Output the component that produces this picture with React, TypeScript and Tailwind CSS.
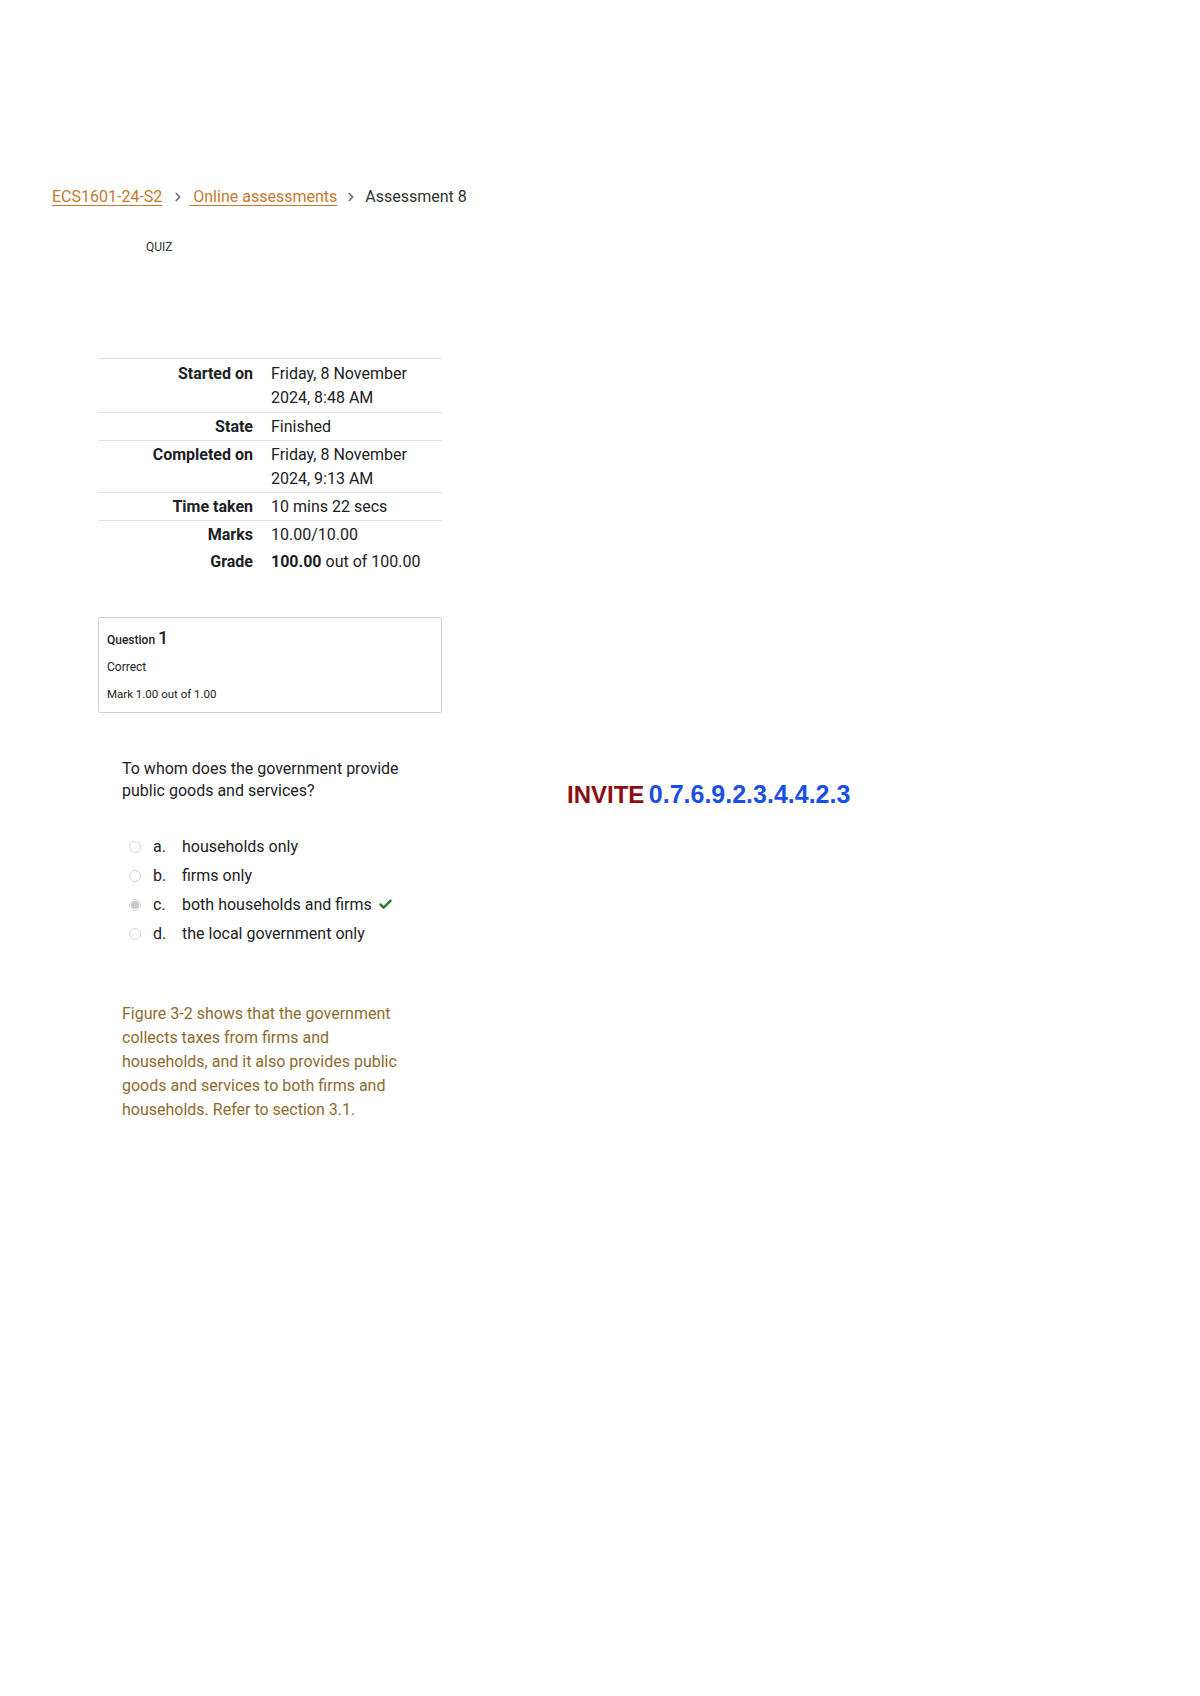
import { Check, ChevronRight } from "lucide-react";

const rows: { label: string; value: React.ReactNode }[] = [
    { label: "Started on", value: "Friday, 8 November 2024, 8:48 AM" },
    { label: "State", value: "Finished" },
    { label: "Completed on", value: "Friday, 8 November 2024, 9:13 AM" },
    { label: "Time taken", value: "10 mins 22 secs" },
    { label: "Marks", value: "10.00/10.00" },
    { label: "Grade", value: <><span className="font-bold">100.00</span> out of 100.00</> },
];

const options = [
    { letter: "a.", text: "households only" },
    { letter: "b.", text: "firms only" },
    { letter: "c.", text: "both households and firms", checked: true },
    { letter: "d.", text: "the local government only" },
];

export default function App() {
    return (
        <div className="min-h-[1696px] bg-white text-[#1d2125] font-['Roboto',sans-serif]">
            <Breadcrumb />
            <p className="ml-[146px] mt-[32px] text-[12px] leading-[14px] text-[#333]">QUIZ</p>

            <SummaryTable />

            <div className="ml-[98px] mt-[42px] w-[344px] border border-[#cfd2d5] rounded-[2px] px-[8px] pt-[10px] pb-[10px]">
                <p className="leading-[20px] text-[12px] font-medium">
                    Question <span className="text-[18px] font-medium">1</span>
                </p>
                <p className="mt-[9px] text-[12px] leading-[16px]">Correct</p>
                <p className="mt-[11px] text-[11.5px] leading-[16px]">Mark 1.00 out of 1.00</p>
            </div>

            <div className="flex mt-[45px] ml-[122px]">
                <div className="w-[285px]">
                    <p className="text-[16px] leading-[22px]">To whom does the government provide public goods and services?</p>
                    <div className="mt-[30px]">
                        {options.map(o => (
                            <div key={o.letter} className="flex items-center h-[29px] text-[16px]">
                                <Radio checked={o.checked} />
                                <span className="ml-[12px] w-[29px]">{o.letter}</span>
                                <span>{o.text}</span>
                                {o.checked && <Check className="ml-[6px] text-[#357a32]" size={15} strokeWidth={4} />}
                            </div>
                        ))}
                    </div>
                    <p className="mt-[54px] w-[284px] text-[16px] leading-[24px] text-[#8c6b2e]">
                        Figure 3-2 shows that the government collects taxes from firms and households, and it also provides public goods and services to both firms and households. Refer to section 3.1.
                    </p>
                </div>
                <p className="ml-[160px] mt-[22px] h-[28px] leading-[28px] whitespace-nowrap font-['Liberation_Sans',Arial,sans-serif] font-bold">
                    <span className="text-[24px] text-[#8b0d0d]">INVITE</span>{" "}
                    <span className="text-[25px] text-[#1a4fe6]">0.7.6.9.2.3.4.4.2.3</span>
                </p>
            </div>
        </div>
    );
}

function Breadcrumb() {
    return (
        <nav className="flex items-center pt-[186px] pl-[52px] text-[16px] leading-[22px]">
            <a className="text-[#c47a2f] underline underline-offset-[3px]">ECS1601-24-S2</a>
            <ChevronRight className="ml-[9px] mr-[4px] text-[#6a737b]" size={14} strokeWidth={3} />
            <a className="text-[#c47a2f] underline underline-offset-[3px] whitespace-pre"> Online assessments</a>
            <ChevronRight className="mx-[7px] text-[#6a737b]" size={14} strokeWidth={3} />
            <span className="text-[#333]">Assessment 8</span>
        </nav>
    );
}

function SummaryTable() {
    return (
        <table className="ml-[98px] mt-[104px] w-[344px] border-collapse text-[16px] leading-[24px]">
            <tbody>
                {rows.map((r, i) => (
                    <tr key={r.label} className={i < 5 ? "border-t border-[#dee2e6]" : ""}>
                        <th className={`w-[165px] pr-[10px] text-right align-top font-bold ${i === 0 ? "py-[2.5px]" : "py-[1.5px]"}`}>{r.label}</th>
                        <td className={`pl-[8px] align-top ${i === 0 ? "py-[2.5px]" : "py-[1.5px]"}`}>{r.value}</td>
                    </tr>
                ))}
            </tbody>
        </table>
    );
}

function Radio({ checked }: { checked?: boolean }) {
    return (
        <span className="ml-[7px] flex h-[12px] w-[12px] items-center justify-center rounded-full border border-[#d6d6d6] bg-white">
            {checked && <span className="h-[8px] w-[8px] rounded-full bg-[#c9c9c9]" />}
        </span>
    );
}
